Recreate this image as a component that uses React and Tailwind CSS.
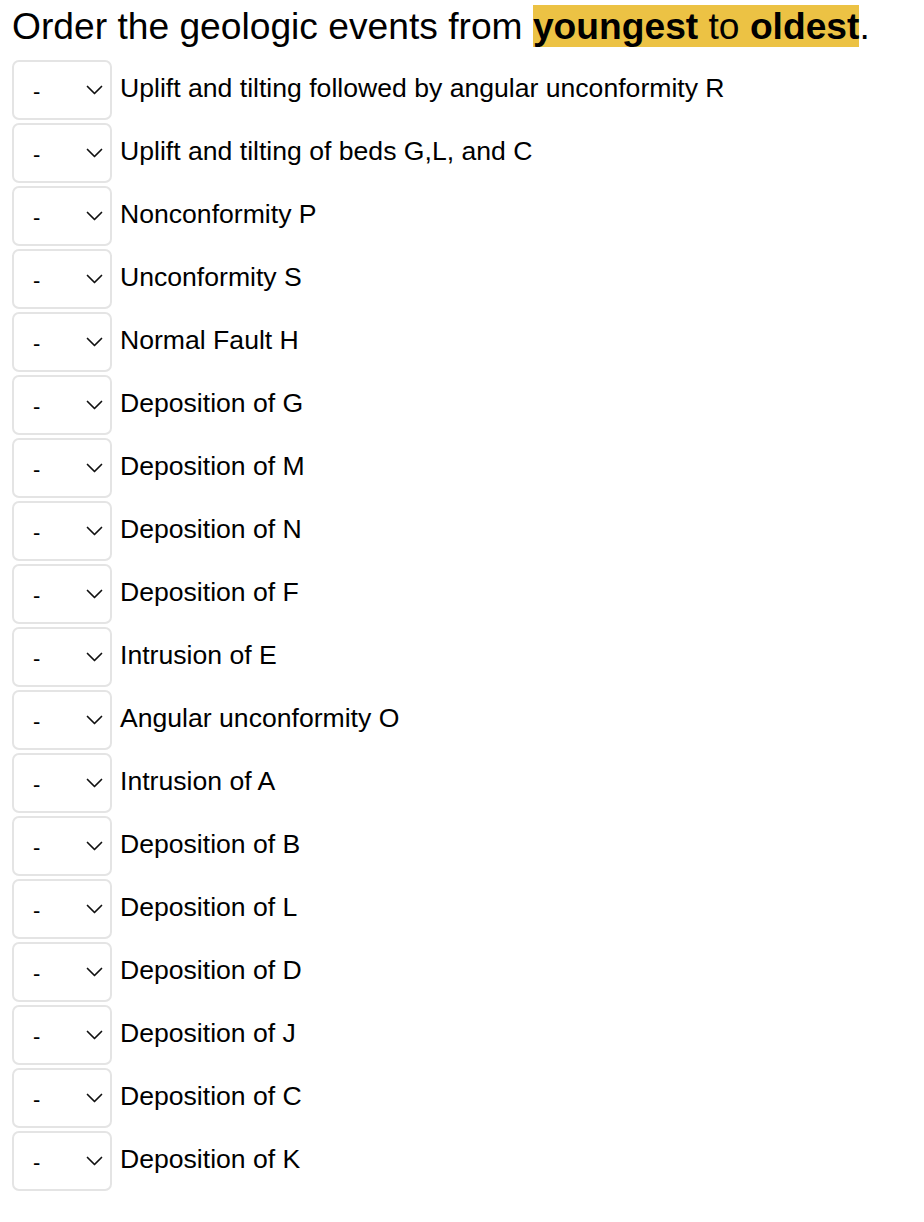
import React from 'react'

const events = [
    'Uplift and tilting followed by angular unconformity R',
    'Uplift and tilting of beds G,L, and C',
    'Nonconformity P',
    'Unconformity S',
    'Normal Fault H',
    'Deposition of G',
    'Deposition of M',
    'Deposition of N',
    'Deposition of F',
    'Intrusion of E',
    'Angular unconformity O',
    'Intrusion of A',
    'Deposition of B',
    'Deposition of L',
    'Deposition of D',
    'Deposition of J',
    'Deposition of C',
    'Deposition of K',
]

const Chevron = () => (
    <svg width="17" height="10" viewBox="0 0 17 10" fill="none" className="absolute left-[72px] top-[23px]">
        <path d="M1.5 1.5 L8.5 8.5 L15.5 1.5" stroke="#111" strokeWidth="1.7" strokeLinecap="round" strokeLinejoin="round" />
    </svg>
)

const OrderRow = ({ label }) => (
    <div className="flex flex-row items-center gap-[8px]">
        <div className="relative h-[60px] w-[100px] shrink-0 rounded-[7px] border-2 border-[#e4e4e4] bg-white">
            <span className="absolute left-[19px] top-[19px] text-[22px] leading-none">-</span>
            <Chevron />
        </div>
        <div className="pb-[3px] text-[26.6px] leading-none">{label}</div>
    </div>
)

export default function App() {
    return (
        <div className="min-h-screen bg-white px-[12px] text-black" style={{ fontFamily: '"Liberation Sans", Arial, sans-serif' }}>
            <h1 className="pt-[5px] pb-[12px] text-[37.2px] leading-[normal]">
                Order the geologic events from{' '}
                <span className="bg-[#ecc244]">
                    <b>youngest</b> to <b>oldest</b>
                </span>
                .
            </h1>
            <div className="flex flex-col gap-[3px]">
                {events.map((e) => (
                    <OrderRow key={e} label={e} />
                ))}
            </div>
        </div>
    )
}
